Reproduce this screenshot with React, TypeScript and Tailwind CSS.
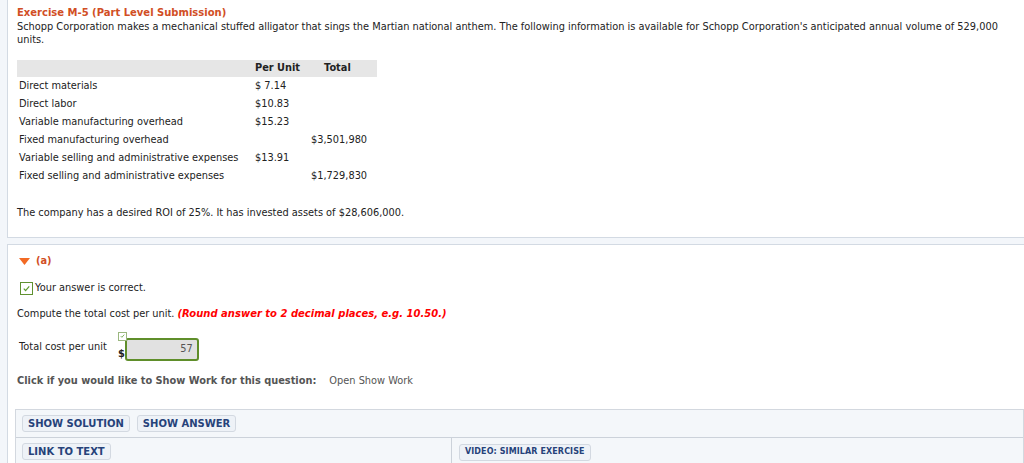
import React from 'react'

const rows = [
  { label: 'Direct materials', unit: '$ 7.14', total: '' },
  { label: 'Direct labor', unit: '$10.83', total: '' },
  { label: 'Variable manufacturing overhead', unit: '$15.23', total: '' },
  { label: 'Fixed manufacturing overhead', unit: '', total: '$3,501,980' },
  { label: 'Variable selling and administrative expenses', unit: '$13.91', total: '' },
  { label: 'Fixed selling and administrative expenses', unit: '', total: '$1,729,830' },
]

function Check({ size = 12 }: { size?: number }) {
  return (
    <svg width={size} height={size} viewBox="0 0 12 12">
      <path d="M3 6.2 L5 8.2 L9 3.6" fill="none" stroke="#5a9a2a" strokeWidth="1.3" />
    </svg>
  )
}

function Btn({ children, small }: { children: React.ReactNode; small?: boolean }) {
  return (
    <span
      className={`inline-flex items-center rounded-[3px] border border-[#d3d9e1] bg-[#eef2f7] px-[5px] font-bold text-[#26427a] ${
        small ? 'h-[17px] text-[8px] tracking-[0.1px]' : 'h-[17px] text-[10px]'
      }`}
    >
      {children}
    </span>
  )
}

export default function App() {
  return (
    <div
      className="h-[463px] w-[1024px] overflow-hidden bg-[#f3f6fa] text-[9.8px] text-[#222]"
      style={{ fontFamily: '"DejaVu Sans", Verdana, sans-serif' }}
    >
      <div className="ml-[7px] h-[238px] border-b border-l border-[#d3dae3] bg-white pl-[9px] pt-[5px]">
        <div className="h-[15px] text-[10px] font-bold text-[#d14e24]">Exercise M-5 (Part Level Submission)</div>
        <p className="m-0 w-[1004px] leading-[13px]">
          Schopp Corporation makes a mechanical stuffed alligator that sings the Martian national anthem. The following
          information is available for Schopp Corporation's anticipated annual volume of 529,000 units.
        </p>
        <div className="mt-[14px] w-[360px]">
          <div className="flex h-[17px] items-center bg-[#e6e6e6] font-bold">
            <div className="w-[238px]" />
            <div className="w-[60px]">Per Unit</div>
            <div className="pl-[9px]">Total</div>
          </div>
          {rows.map((r) => (
            <div key={r.label} className="flex h-[18px] items-center">
              <div className="w-[238px] pl-[2px]">{r.label}</div>
              <div className="w-[56px]">{r.unit}</div>
              <div>{r.total}</div>
            </div>
          ))}
        </div>
        <p className="m-0 mt-[21px]">The company has a desired ROI of 25%. It has invested assets of $28,606,000.</p>
      </div>

      <div className="ml-[7px] mt-[6px] h-[300px] border-l border-t border-[#d3dae3] bg-white pl-[9px] pt-[9px]">
        <div className="flex h-[14px] items-center gap-[6px] font-bold text-[#d14e24]">
          <svg width="11" height="7" viewBox="0 0 11 7" className="ml-[2px]">
            <path d="M0 0 H11 L5.5 7 Z" fill="#f26a25" />
          </svg>
          <span>(a)</span>
        </div>
        <div className="mt-[13px] flex items-center gap-[2px]">
          <span className="ml-[3px] flex h-[13px] w-[13px] items-center justify-center border border-[#5f9130] bg-white">
            <Check size={11} />
          </span>
          <span>Your answer is correct.</span>
        </div>
        <div className="mt-[11px] h-[14px] leading-[14px]">
          Compute the total cost per unit.{' '}
          <span className="text-[10px] font-bold italic text-[#ff0000]">
            (Round answer to 2 decimal places, e.g. 10.50.)
          </span>
        </div>
        <div className="mt-[11px] flex h-[29px] items-start">
          <div className="w-[101px] pl-[2px] pt-[9px] leading-[12px]">Total cost per unit</div>
          <div className="relative flex items-end pt-[6px]">
            <span className="absolute left-0 top-0 flex h-[9px] w-[9px] items-center justify-center border border-[#9bb77f] bg-white">
              <Check size={8} />
            </span>
            <span className="pb-[1px] font-bold leading-[12px]">$</span>
            <div className="flex h-[23px] w-[74px] items-center justify-end rounded-[3px] border-2 border-[#5f8e2a] bg-[#e1e1e1] pr-[4px] text-[#555]">
              57
            </div>
          </div>
        </div>
        <div className="mt-[14px] flex h-[14px] items-center">
          <span className="font-bold text-[#555]">Click if you would like to Show Work for this question:</span>
          <span className="ml-[13px] text-[#555]">Open Show Work</span>
        </div>
        <div className="ml-[-2px] mt-[20px] border border-[#d3d8df] bg-[#f4f7fa]">
          <div className="flex h-[28px] items-center gap-[7px] border-b border-[#ccd2da] pl-[6px]">
            <Btn>SHOW SOLUTION</Btn>
            <Btn>SHOW ANSWER</Btn>
          </div>
          <div className="flex h-[30px]">
            <div className="w-[436px] border-r border-[#ccd2da] pl-[6px] pt-[5px]">
              <Btn>LINK TO TEXT</Btn>
            </div>
            <div className="pl-[7px] pt-[6px]">
              <Btn small>VIDEO: SIMILAR EXERCISE</Btn>
            </div>
          </div>
        </div>
      </div>
    </div>
  )
}
